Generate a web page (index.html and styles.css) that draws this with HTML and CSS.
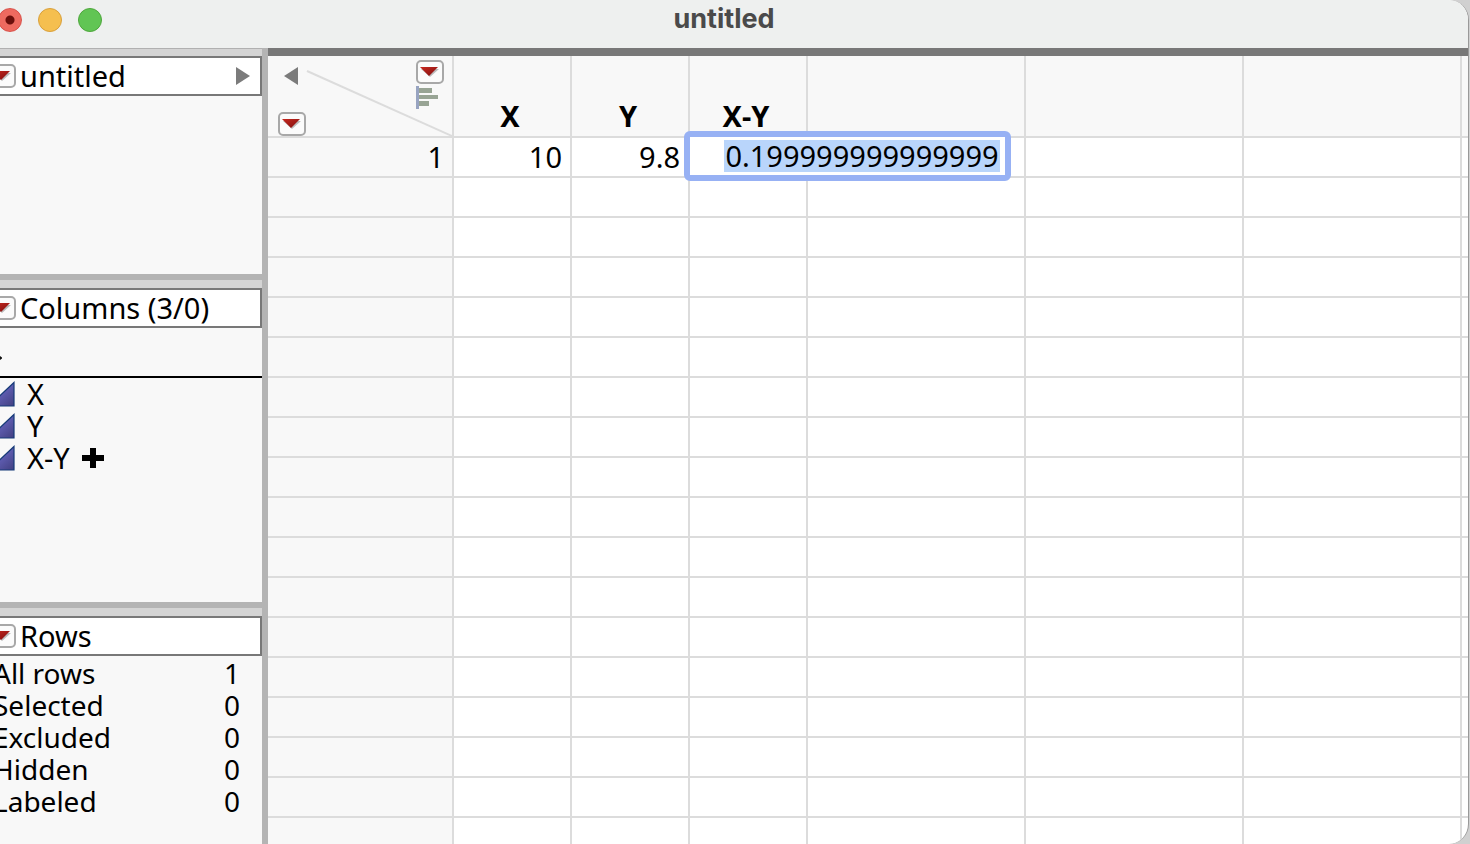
FILE: index.html
```html
<!DOCTYPE html>
<html lang="en">
<head>
<meta charset="utf-8">
<title>untitled</title>
<link rel="stylesheet" href="styles.css">
</head>
<body>
<svg class="defs" aria-hidden="true">
  <defs>
    <linearGradient id="red" x1="0" y1="0" x2="1" y2="1"><stop offset="0" stop-color="#c8281f"/><stop offset="1" stop-color="#7e0f0f"/></linearGradient>
    <linearGradient id="blue" x1="0" y1="0" x2="1" y2="1"><stop offset="0.3" stop-color="#6a68c4"/><stop offset="1" stop-color="#413f80"/></linearGradient>
    <symbol id="tri" viewBox="0 0 20 12"><path d="M1 3h18l-9 8z" fill="#bbb"/><path d="M0 1h18l-9 9z" fill="url(#red)"/></symbol>
    <symbol id="cont" viewBox="0 0 27 26"><path d="M1 25L26 1.500V25z" fill="url(#blue)" stroke="#163a78" stroke-width="1.200"/></symbol>
  </defs>
</svg>
<div class="window">
  <header class="titlebar">
    <div class="lights">
      <button class="light close" aria-label="Close"></button>
      <button class="light minimize" aria-label="Minimize"></button>
      <button class="light expand" aria-label="Zoom"></button>
    </div>
    <h1 class="title">untitled</h1>
  </header>
  <div class="content">
    <aside class="sidebar">
      <section class="panel panel-table">
        <div class="panel-head">
          <button class="menu" aria-label="Table menu"><svg class="tri"><use href="#tri"/></svg></button>
          <h2 class="panel-title">untitled</h2>
          <button class="arrow" aria-label="Expand"><svg class="arrow-icon" viewBox="0 0 14 18"><path d="M0 0l14 9-14 9z" fill="#7b7b7b"/></svg></button>
        </div>
      </section>
      <section class="panel panel-columns">
        <div class="panel-head">
          <button class="menu" aria-label="Columns menu"><svg class="tri"><use href="#tri"/></svg></button>
          <h2 class="panel-title">Columns (3/0)</h2>
        </div>
        <div class="filter"><svg class="filter-icon" viewBox="0 0 14 14"><path d="M4 1l9 7-4 3" fill="none" stroke="#111" stroke-width="2"/></svg></div>
        <ul class="list">
          <li class="item"><svg class="cont"><use href="#cont"/></svg>X</li>
          <li class="item"><svg class="cont"><use href="#cont"/></svg>Y</li>
          <li class="item"><svg class="cont"><use href="#cont"/></svg>X-Y<svg class="plus" viewBox="0 0 22 20"><path d="M8 0h6v7h8v6h-8v7H8v-7H0V7h8z"/></svg></li>
        </ul>
      </section>
      <section class="panel panel-rows">
        <div class="panel-head">
          <button class="menu" aria-label="Rows menu"><svg class="tri"><use href="#tri"/></svg></button>
          <h2 class="panel-title">Rows</h2>
        </div>
        <dl class="counts">
          <div class="count"><dt>All rows</dt><dd>1</dd></div>
          <div class="count"><dt>Selected</dt><dd>0</dd></div>
          <div class="count"><dt>Excluded</dt><dd>0</dd></div>
          <div class="count"><dt>Hidden</dt><dd>0</dd></div>
          <div class="count"><dt>Labeled</dt><dd>0</dd></div>
        </dl>
      </section>
    </aside>
    <main class="sheet">
      <table class="grid">
        <colgroup><col class="c-row"><col class="c-s"><col class="c-s"><col class="c-s"><col class="c-l"><col class="c-l"><col class="c-l"><col></colgroup>
        <thead>
          <tr>
            <th class="corner">
              <div class="corner-box">
                <svg class="diagonal" viewBox="0 0 146 66" preserveAspectRatio="none"><path d="M1 1L146 66" stroke="#dcdcdc" stroke-width="2"/></svg>
                <div class="corner-side">
                  <button class="arrow back" aria-label="Collapse"><svg class="arrow-icon" viewBox="0 0 14 18"><path d="M14 0L0 9l14 9z" fill="#7b7b7b"/></svg></button>
                  <button class="menu" aria-label="Row menu"><svg class="tri"><use href="#tri"/></svg></button>
                </div>
                <div class="corner-side">
                  <button class="menu" aria-label="Column menu"><svg class="tri"><use href="#tri"/></svg></button>
                  <button class="arrow" aria-label="Header graphs"><svg class="bars" viewBox="0 0 22 23"><path d="M0 0h3v23H0z" fill="#98a4c1"/><path d="M3 2h13v5H3zM3 9h19v4H3zM3 15h10v5H3z" fill="#98a494"/></svg></button>
                </div>
              </div>
            </th>
            <th>X</th><th>Y</th><th>X-Y</th><th></th><th></th><th></th><th></th>
          </tr>
        </thead>
        <tbody>
          <tr><th>1</th><td>10</td><td>9.8</td><td class="editing"><div class="editor"><input class="edit" aria-label="X-Y, row 1" value="0.199999999999999"></div></td><td></td><td></td><td></td><td></td></tr>
          <tr><th></th><td></td><td></td><td></td><td></td><td></td><td></td><td></td></tr>
          <tr><th></th><td></td><td></td><td></td><td></td><td></td><td></td><td></td></tr>
          <tr><th></th><td></td><td></td><td></td><td></td><td></td><td></td><td></td></tr>
          <tr><th></th><td></td><td></td><td></td><td></td><td></td><td></td><td></td></tr>
          <tr><th></th><td></td><td></td><td></td><td></td><td></td><td></td><td></td></tr>
          <tr><th></th><td></td><td></td><td></td><td></td><td></td><td></td><td></td></tr>
          <tr><th></th><td></td><td></td><td></td><td></td><td></td><td></td><td></td></tr>
          <tr><th></th><td></td><td></td><td></td><td></td><td></td><td></td><td></td></tr>
          <tr><th></th><td></td><td></td><td></td><td></td><td></td><td></td><td></td></tr>
          <tr><th></th><td></td><td></td><td></td><td></td><td></td><td></td><td></td></tr>
          <tr><th></th><td></td><td></td><td></td><td></td><td></td><td></td><td></td></tr>
          <tr><th></th><td></td><td></td><td></td><td></td><td></td><td></td><td></td></tr>
          <tr><th></th><td></td><td></td><td></td><td></td><td></td><td></td><td></td></tr>
          <tr><th></th><td></td><td></td><td></td><td></td><td></td><td></td><td></td></tr>
          <tr><th></th><td></td><td></td><td></td><td></td><td></td><td></td><td></td></tr>
          <tr><th></th><td></td><td></td><td></td><td></td><td></td><td></td><td></td></tr>
          <tr><th></th><td></td><td></td><td></td><td></td><td></td><td></td><td></td></tr>
        </tbody>
      </table>
    </main>
  </div>
</div>
</body>
</html>
```
FILE: styles.css
```css
* { box-sizing: border-box; }
body {
  margin: 0;
  height: 100vh;
  overflow: hidden;
  background: #d0d0d0;
  color: #000;
  font: 28px/32px "Noto Sans", sans-serif;
}
h1, h2, ul, dl, dd { margin: 0; padding: 0; font-weight: 400; }
button { padding: 0; border: 0; background: none; }
svg { display: block; flex: none; }
.defs { position: absolute; width: 0; height: 0; }

.window {
  display: flex;
  flex-direction: column;
  height: 100%;
  margin-right: 1px;
  overflow: hidden;
  border-right: 1px solid #999;
  border-radius: 0 20px 20px 0;
  background: #fff;
}
.titlebar {
  display: grid;
  grid-template-columns: 1fr auto 1fr;
  flex: none;
  height: 48px;
  background: #eef0ef;
}
.lights { display: flex; gap: 16px; margin: 8px 0 0 -2px; }
.light {
  width: 24px;
  height: 24px;
  border: 1px solid #d9a03c;
  border-radius: 50%;
  background: #f5bf4f;
}
.close { border-color: #d9514a; background: radial-gradient(circle, #6b0f0b 4px, #ee6a5f 5px); }
.expand { border-color: #4ea73c; background: #61c554; }
.title {
  padding-right: 20px;
  color: #4a4a4a;
  font: 700 27px/38px Inter, sans-serif;
}

.content { display: flex; flex: 1; min-height: 0; }
.sidebar {
  display: flex;
  flex-direction: column;
  flex: none;
  width: 280px;
  margin-left: -12px;
  border-right: 6px solid #b4b4b4;
  background: #f8f8f8;
}
.panel { border-top: 6px solid #b4b4b4; }
.panel-table { flex: none; height: 226px; border-top: 1px solid #b0b0b0; }
.panel-columns { flex: none; height: 328px; }
.panel-rows { flex: 1; }
.panel-head {
  display: flex;
  align-items: center;
  gap: 4px;
  height: 40px;
  margin-top: 8px;
  padding-right: 10px;
  border: 2px solid #787878;
  border-left: 0;
  background: #fff;
  box-shadow: 0 -8px #d4d4d4;
}
.panel-table .panel-head { margin-top: 7px; box-shadow: 0 -7px #d4d4d4; }
.panel-title { flex: 1; font-size: 29px; line-height: 32px; }
.menu {
  display: grid;
  place-items: center;
  width: 28px;
  height: 24px;
  border: 2px solid #a8a8a8;
  border-radius: 5px;
  background: #fbfbfb;
}
.tri { width: 20px; height: 12px; }
.arrow-icon { width: 14px; height: 18px; }

.filter { display: flex; align-items: center; height: 50px; padding-top: 10px; border-bottom: 2px solid #000; }
.filter-icon { width: 14px; height: 14px; }
.list { list-style: none; font-size: 29px; }
.item { display: flex; align-items: center; gap: 12px; height: 32px; }
.cont { width: 27px; height: 26px; }
.plus { width: 22px; height: 20px; }
.counts { padding: 1px 22px 0 5px; }
.count { display: flex; justify-content: space-between; }

.sheet { flex: 1; min-width: 0; overflow: hidden; border-top: 8px solid #787878; }
.grid { width: 100%; table-layout: fixed; border-spacing: 0; }
.c-row { width: 186px; }
.c-s { width: 118px; }
.c-l { width: 218px; }
.grid th, .grid td {
  height: 40px;
  padding: 2px 8px;
  border: 0 solid #dcdcdc;
  border-width: 0 2px 2px 0;
  font-weight: 400;
  font-size: 29px;
  text-align: right;
}
.grid th { background: #f8f8f8; }
.grid tr > :last-child { border-right: 0; }
.grid thead th {
  height: 82px;
  padding: 0 4px 4px 0;
  font-weight: 700;
  text-align: center;
  vertical-align: bottom;
}
.grid thead .corner { padding: 0; vertical-align: top; }
.corner-box {
  display: flex;
  justify-content: space-between;
  position: relative;
  height: 80px;
  padding: 4px 8px 0 10px;
}
.corner-side { display: flex; flex-direction: column; gap: 2px; position: relative; }
.corner-side:first-of-type { gap: 3px; }
.back { padding: 7px 0 1px 6px; }
.corner-side:first-of-type .menu { margin-top: 23px; }
.bars { width: 22px; height: 23px; }
.diagonal { position: absolute; right: 0; bottom: 0; width: 146px; height: 66px; }

.grid .editing { position: relative; }
.editor {
  position: absolute;
  left: -6px;
  top: -7px;
  z-index: 1;
  padding: 3px 5px 3px 34px;
  border: 6px solid #97b1f4;
  border-radius: 6px;
  background: #fff;
}
.edit {
  display: block;
  width: 276px;
  height: 32px;
  padding: 0;
  border: 0;
  outline: 0;
  background: #b9d5fb;
  font: 29px/32px "Noto Sans", sans-serif;
  text-align: center;
}
```
